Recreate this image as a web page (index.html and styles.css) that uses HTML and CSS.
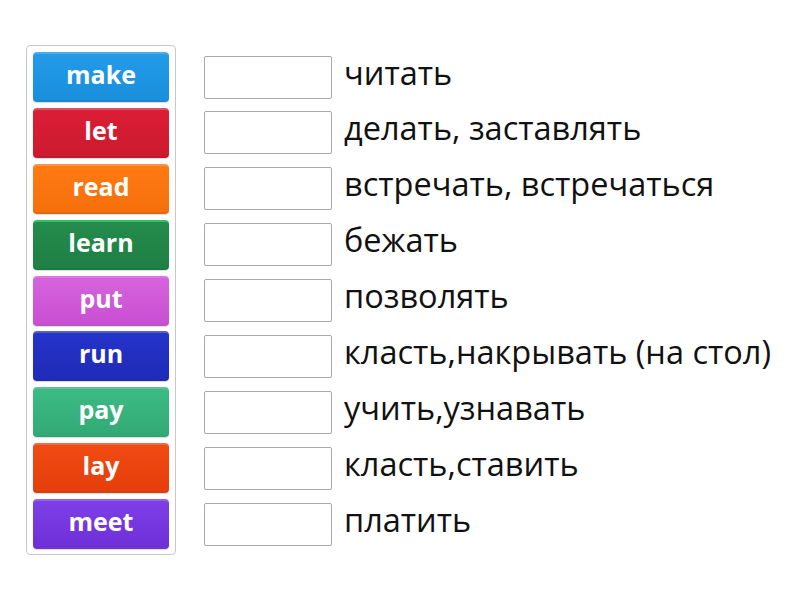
FILE: index.html
```html
<!DOCTYPE html>
<html>
<head>
<meta charset="utf-8">
<link rel="stylesheet" href="styles.css">
</head>
<body>
<div class="page">
  <div class="bank">
    <div class="tile c-make">make</div>
    <div class="tile c-let">let</div>
    <div class="tile c-read">read</div>
    <div class="tile c-learn">learn</div>
    <div class="tile c-put">put</div>
    <div class="tile c-run">run</div>
    <div class="tile c-pay">pay</div>
    <div class="tile c-lay">lay</div>
    <div class="tile c-meet">meet</div>
  </div>
  <div class="targets">
    <div class="row"><div class="slot"></div><div class="def">читать</div></div>
    <div class="row"><div class="slot"></div><div class="def">делать, заставлять</div></div>
    <div class="row"><div class="slot"></div><div class="def">встречать, встречаться</div></div>
    <div class="row"><div class="slot"></div><div class="def">бежать</div></div>
    <div class="row"><div class="slot"></div><div class="def">позволять</div></div>
    <div class="row"><div class="slot"></div><div class="def">класть,накрывать (на стол)</div></div>
    <div class="row"><div class="slot"></div><div class="def">учить,узнавать</div></div>
    <div class="row"><div class="slot"></div><div class="def">класть,ставить</div></div>
    <div class="row"><div class="slot"></div><div class="def">платить</div></div>
  </div>
</div>
</body>
</html>
```

FILE: styles.css
```css
html, body {
  margin: 0;
  padding: 0;
  background: #fff;
  font-family: "Open Sans", "Liberation Sans", sans-serif;
}
.page {
  display: flex;
  align-items: flex-start;
  padding: 45px 0 0 26px;
}
.bank {
  box-sizing: border-box;
  width: 150px;
  height: 510px;
  border: 1px solid #c8c8c8;
  border-radius: 4px;
  padding: 6px;
  display: grid;
  grid-template-rows: repeat(9, 50px);
  row-gap: 5.875px;
}
.tile {
  box-sizing: border-box;
  height: 50px;
  border-radius: 4px;
  color: #fff;
  font-weight: 700;
  font-size: 25px;
  display: flex;
  align-items: center;
  justify-content: center;
  padding-bottom: 6px;
  border-top: 2px solid rgba(255,255,255,0.25);
  border-bottom: 2px solid rgba(0,0,0,0.12);
  box-shadow: 0 1px 1px rgba(0,0,0,0.15);
}
.c-make { background: linear-gradient(#229be8, #1a8fdc); }
.c-let { background: linear-gradient(#db1d36, #cc1a2e); }
.c-read { background: linear-gradient(#ff7a12, #f5700c); }
.c-learn { background: linear-gradient(#238c4c, #1f7f44); border-top-color: #34c067; }
.c-put { background: linear-gradient(#d663dd, #c94fd2); }
.c-run { background: linear-gradient(#2433c9, #1f2bb8); }
.c-pay { background: linear-gradient(#3cbb84, #33aa76); }
.c-lay { background: linear-gradient(#f24a12, #e53e0c); }
.c-meet { background: linear-gradient(#7d3fe6, #6e2fd8); }
.targets {
  margin-left: 28px;
  padding-top: 7px;
  display: grid;
  grid-template-rows: repeat(9, 50px);
  row-gap: 5.875px;
}
.row {
  display: flex;
  align-items: center;
}
.slot {
  box-sizing: border-box;
  width: 128px;
  height: 43px;
  border: 1px solid #a9a9a9;
  border-radius: 2px;
  background: #fff;
  flex: none;
}
.def {
  margin-left: 12px;
  font-size: 32.5px;
  color: #111;
  white-space: nowrap;
  padding-bottom: 10px;
}
```
